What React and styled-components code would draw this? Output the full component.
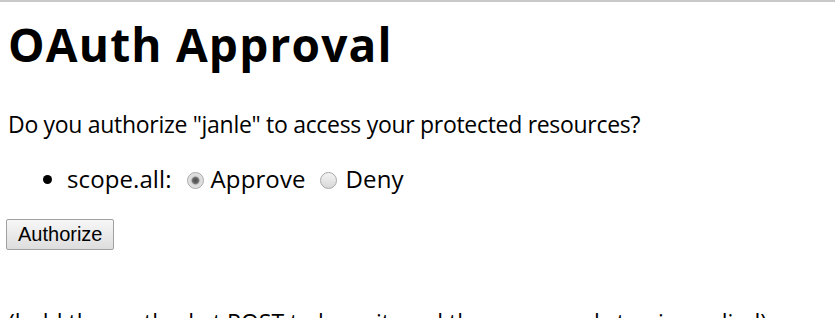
import React from "react";
import styled, { createGlobalStyle } from "styled-components";

const GlobalStyle = createGlobalStyle`
  html, body {
    margin: 0;
    padding: 0;
    background: #fff;
  }
  body {
    font-family: "Open Sans", "Noto Sans", sans-serif;
    color: #000;
    overflow: hidden;
  }
`;

const Page = styled.div`
  border-top: 2px solid #c8c8c8;
  padding: 0 8px;
  height: 316px;
  overflow: hidden;
`;

const Title = styled.h1`
  font-size: 46px;
  font-weight: 700;
  letter-spacing: 1.2px;
  line-height: 56px;
  margin: 14px 0 36px;
`;

const Question = styled.p`
  font-size: 23px;
  letter-spacing: -0.3px;
  line-height: 32px;
  margin: 0 0 23px;
`;

const ScopeList = styled.ul`
  margin: 0 0 24px;
  padding-left: 59px;
  font-size: 24px;
  letter-spacing: 0.1px;
  line-height: 32px;
`;

const ScopeItem = styled.li`
  display: list-item;
`;

const Choice = styled.label`
  display: inline-flex;
  align-items: center;
  margin-left: ${({ first }) => (first ? "15px" : "14px")};
  vertical-align: top;
`;

const Radio = styled.span`
  display: inline-block;
  width: 17px;
  height: 17px;
  margin: 2px ${({ checked }) => (checked ? "7px" : "9px")} 0 0;
  border-radius: 50%;
  border: 1px solid #a8a8a8;
  box-sizing: border-box;
  background: ${({ checked }) =>
    checked
      ? "radial-gradient(circle, #4a4a4a 0, #6a6a6a 3px, #d8d8d8 4.5px, #efefef 100%)"
      : "linear-gradient(#f4f4f4, #d8d8d8)"};
`;

const Button = styled.button`
  display: block;
  font-family: "Liberation Sans", Arial, sans-serif;
  font-size: 20px;
  margin-left: -2px;
  padding: 0 11px;
  height: 31px;
  width: 108px;
  border: 1px solid #a0a0a0;
  border-radius: 2px;
  background: linear-gradient(#f7f7f7, #dddddd);
  color: #000;
`;

const Footnote = styled.p`
  font-size: 23px;
  line-height: 32px;
  margin: 56px 0 0;
  white-space: nowrap;
`;

export default function App() {
  return (
    <>
      <GlobalStyle />
      <Page>
        <Title>OAuth Approval</Title>
        <Question>Do you authorize "janle" to access your protected resources?</Question>
        <ScopeList>
          <ScopeItem>
            scope.all:
            <Choice first>
              <Radio checked />
              Approve
            </Choice>
            <Choice>
              <Radio />
              Deny
            </Choice>
          </ScopeItem>
        </ScopeList>
        <Button>Authorize</Button>
        <Footnote>(hold the method at POST to keep it, and then a second step is applied)</Footnote>
      </Page>
    </>
  );
}
